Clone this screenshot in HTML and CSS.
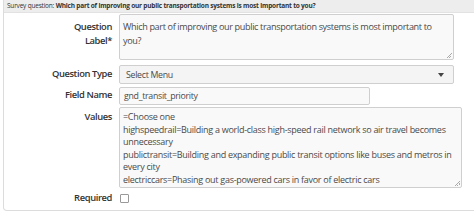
FILE: index.html
```html
<!DOCTYPE html>
<html>
<head>
<meta charset="utf-8">
<link rel="stylesheet" href="styles.css">
</head>
<body>
<div class="panel">
  <div class="panel-head">Survey question: <b>Which part of improving our public transportation systems is most important to you?</b></div>
  <div class="panel-body">
    <div class="row row-label">
      <div class="label">Question<br>Label*</div>
      <div class="field"><div class="ta ta-label">Which part of improving our public transportation systems is most important to you?<span class="grip"></span></div></div>
    </div>
    <div class="row row-select">
      <div class="label">Question Type</div>
      <div class="field"><div class="select"><span>Select Menu</span><span class="caret"></span></div></div>
    </div>
    <div class="row row-input">
      <div class="label">Field Name</div>
      <div class="field"><div class="input">gnd_transit_priority</div></div>
    </div>
    <div class="row row-values">
      <div class="label">Values</div>
      <div class="field"><div class="ta ta-values">=Choose one<br>highspeedrail=Building a world-class high-speed rail network so air travel becomes unnecessary<br>publictransit=Building and expanding public transit options like buses and metros in every city<br>electriccars=Phasing out gas-powered cars in favor of electric cars<span class="grip"></span></div></div>
    </div>
    <div class="row row-check">
      <div class="label">Required</div>
      <div class="field"><span class="checkbox"></span></div>
    </div>
  </div>
</div>
</body>
</html>
```
FILE: styles.css
```css
html, body {
  margin: 0;
  padding: 0;
  background: #ffffff;
}
body {
  font-family: "Open Sans", "Liberation Sans", sans-serif;
  color: #333333;
  width: 474px;
  height: 215px;
  overflow: hidden;
}
.panel {
  margin: 0 -10px 0 3px;
  border: 1px solid #dcdcdc;
  border-top: none;
  border-radius: 0 0 4px 4px;
  height: 211px;
  box-sizing: border-box;
}
.panel-head {
  background: #ededed;
  border-bottom: 1px solid #e2e2e2;
  height: 13px;
  box-sizing: border-box;
  font-size: 6.5px;
  letter-spacing: -0.2px;
  line-height: 12px;
  padding-left: 3px;
  color: #333;
  white-space: nowrap;
}
.panel-head b {
  font-weight: 700;
}
.panel-body {
  padding-top: 1px;
}
.row {
  display: flex;
  align-items: flex-start;
}
.label {
  width: 114px;
  flex: none;
  text-align: right;
  font-weight: 600;
  font-size: 9.4px;
  letter-spacing: -0.4px;
  line-height: 14px;
  padding-right: 6px;
  box-sizing: border-box;
  color: #333;
  white-space: nowrap;
}
.field {
  flex: none;
  padding-left: 1px;
}
.ta {
  position: relative;
  background: #f9f9f9;
  border: 1px solid #cfcfcf;
  border-radius: 2px;
  box-sizing: border-box;
  color: #4a4a4a;
}
.ta-label {
  width: 335px;
  height: 46px;
  font-size: 9.1px;
  letter-spacing: -0.36px;
  line-height: 14px;
  padding: 5px 3px;
}
.row-label .label {
  padding-top: 6px;
}
.grip {
  position: absolute;
  right: 1px;
  bottom: 1px;
  width: 5px;
  height: 5px;
  background: linear-gradient(135deg, transparent 0 45%, #aaa 45% 55%, transparent 55% 70%, #aaa 70% 80%, transparent 80%);
}
.row-select {
  margin-top: 5px;
}
.row-select .label {
  padding-top: 2px;
}
.select {
  width: 335px;
  height: 19px;
  background: #f4f4f4;
  border: 1px solid #cfcfcf;
  border-radius: 2px;
  box-sizing: border-box;
  display: flex;
  align-items: center;
  justify-content: space-between;
  padding: 0 9px 0 6px;
  font-size: 8.8px;
  letter-spacing: -0.3px;
  color: #4a4a4a;
}
.caret {
  width: 0;
  height: 0;
  border-left: 3px solid transparent;
  border-right: 3px solid transparent;
  border-top: 4px solid #444;
}
.row-input {
  margin-top: 3px;
}
.row-input .label {
  padding-top: 1px;
}
.input {
  width: 251px;
  height: 18px;
  background: #f9f9f9;
  border: 1px solid #cfcfcf;
  border-radius: 2px;
  box-sizing: border-box;
  padding: 0 4px;
  font-size: 8.8px;
  letter-spacing: -0.3px;
  line-height: 16px;
  color: #4a4a4a;
}
.row-values {
  margin-top: 2px;
}
.row-values .label {
  padding-top: 3px;
}
.ta-values {
  width: 343px;
  height: 81px;
  font-size: 9px;
  letter-spacing: -0.28px;
  line-height: 12.6px;
  padding: 3px 3px;
}
.row-check {
  margin-top: 3px;
}
.row-check .label {
  padding-top: 0;
}
.checkbox {
  display: block;
  margin-top: 3px;
  margin-left: 1px;
  width: 7px;
  height: 7px;
  border: 1px solid #999;
  border-radius: 1px;
  background: #fff;
}
```
